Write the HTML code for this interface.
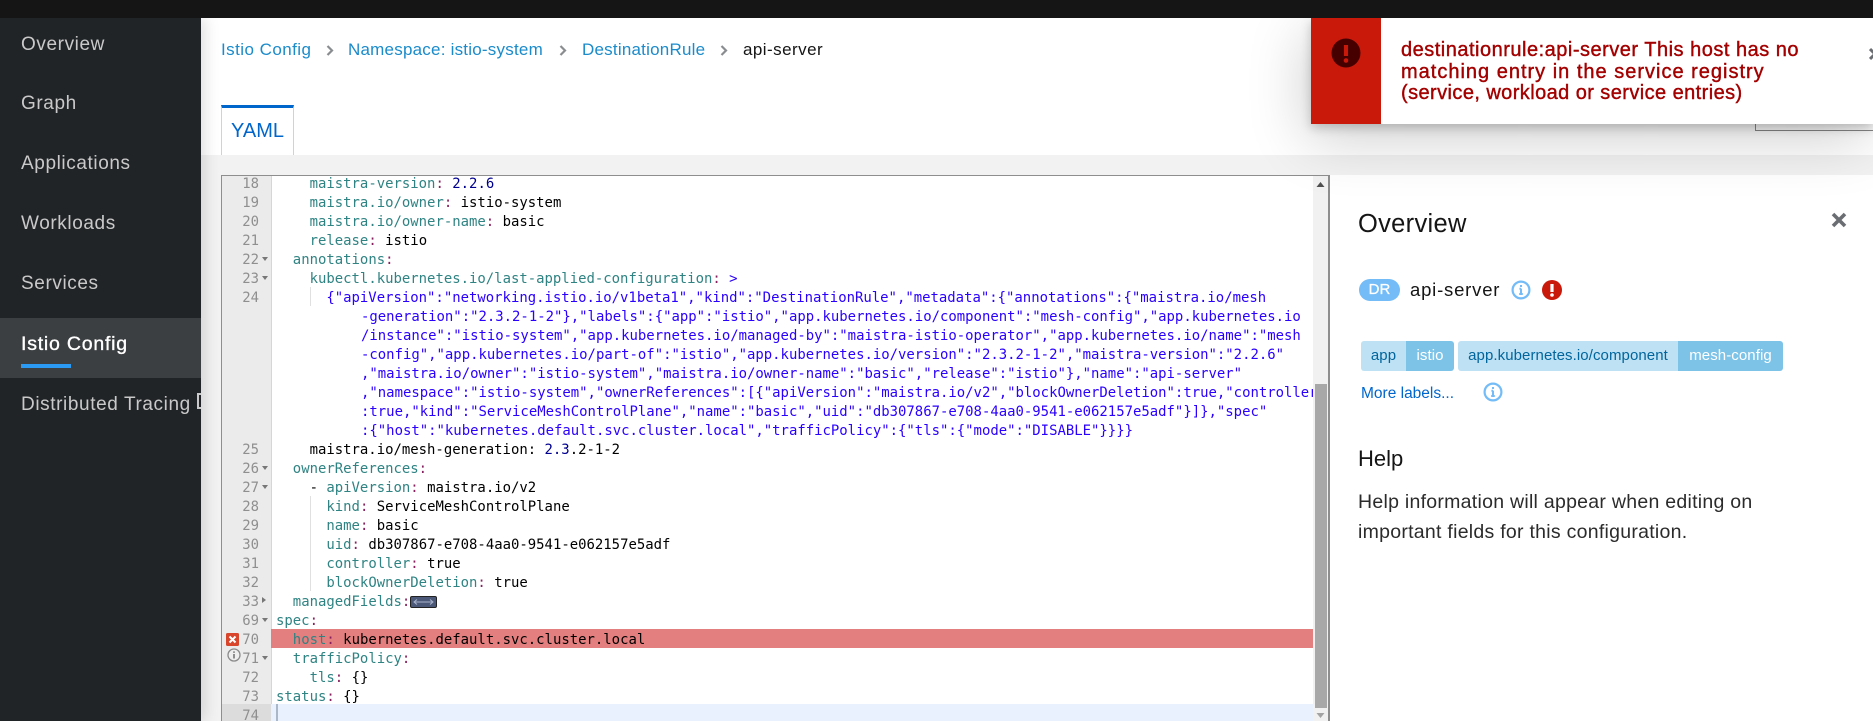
<!DOCTYPE html>
<html><head><meta charset="utf-8">
<style>
html,body{margin:0;padding:0;width:1873px;height:721px;overflow:hidden;background:#fff;font-family:"Liberation Sans",sans-serif}
.a{position:absolute;white-space:pre}
#top{left:0;top:0;width:1873px;height:18px;background:#151515;z-index:9}
#side{left:0;top:18px;width:201px;height:703px;background:#212427;z-index:6;box-shadow:4px 0 14px rgba(0,0,0,.13);overflow:hidden}
.nav{position:absolute;left:21px;font-size:19px;letter-spacing:.6px;color:#c9c9c9;line-height:24px}
#main-bg{left:201px;top:155px;width:1672px;height:566px;background:#f2f2f2}
.bc{top:40px;font-size:17px;letter-spacing:.22px;line-height:20px;color:#1a8bcb}
#ed{left:221px;top:175px;width:1109px;height:546px;background:#fff;border-left:1px solid #8e8e8e;border-top:1px solid #8e8e8e;border-right:2px solid #8e8e8e;box-sizing:border-box;overflow:hidden}
#code{position:absolute;left:0;top:0;width:1091px;height:546px;overflow:hidden}
#gut{position:absolute;left:0;top:0;width:49px;height:546px;background:#ebebeb;border-right:1px solid #d6d6d6;box-sizing:content-box}
.r,.n{position:absolute;margin-top:2px;font-family:"DejaVu Sans Mono",monospace;font-size:13.95px;line-height:19px;height:19px;white-space:pre;color:#000}
.r{left:54px}
.n{left:0;width:37px;text-align:right;color:#8f8f8f}
.k{color:#2f8383}.p{color:#86205f}.d{color:#00008f}.s{color:#2a00ff}
.w{left:139px;color:#2a00ff}
.f{position:absolute;left:40px;width:0;height:0}
.fd{border-left:3px solid transparent;border-right:3px solid transparent;border-top:4px solid #777}
.fr{border-top:3px solid transparent;border-bottom:3px solid transparent;border-left:4px solid #777}
.lab{top:341px;height:30px;line-height:30px;font-size:15px;text-align:center;letter-spacing:.08px}
.lk{background:#bee1f4;color:#00659c}.lv{background:#7dc3e8;color:#fff}
</style></head>
<body>
<div class="a" id="top"></div>

<div class="a" id="side">
<div class="nav" style="top:15px">Overview</div>
<div class="nav" style="top:74px">Graph</div>
<div class="nav" style="top:134px">Applications</div>
<div class="nav" style="top:194px">Workloads</div>
<div class="nav" style="top:254px">Services</div>
<div style="position:absolute;left:0;top:300px;width:201px;height:60px;background:#3c3f42"></div>
<div style="position:absolute;left:21px;top:346px;width:50px;height:4px;background:#2b9af3"></div>
<div class="nav" style="top:314px;color:#fff;-webkit-text-stroke:.35px #fff;font-size:19.5px;letter-spacing:.78px">Istio Config</div>
<div class="nav" style="top:375px">Distributed Tracing</div>
<div style="position:absolute;left:197px;top:375px;width:8px;height:16px;border:2px solid #c9c9c9;box-sizing:border-box"></div>
</div>

<div class="a" id="main-bg"></div>

<div class="a bc" style="left:221px;letter-spacing:.45px">Istio Config</div>
<div class="a bc" style="left:348px">Namespace: istio-system</div>
<div class="a bc" style="left:582px">DestinationRule</div>
<div class="a bc" style="left:743px;color:#151515;letter-spacing:.45px">api-server</div>
<svg class="a" style="left:326px;top:45px" width="8" height="11"><path d="M1.5 1l4.5 4.5-4.5 4.5" fill="none" stroke="#8a8d90" stroke-width="2.2"/></svg>
<svg class="a" style="left:559px;top:45px" width="8" height="11"><path d="M1.5 1l4.5 4.5-4.5 4.5" fill="none" stroke="#8a8d90" stroke-width="2.2"/></svg>
<svg class="a" style="left:720px;top:45px" width="8" height="11"><path d="M1.5 1l4.5 4.5-4.5 4.5" fill="none" stroke="#8a8d90" stroke-width="2.2"/></svg>

<div class="a" style="left:221px;top:105px;width:73px;height:50px;background:#fff;border-top:3px solid #06c;border-left:1px solid #d2d2d2;border-right:1px solid #d2d2d2;box-sizing:border-box;z-index:1"></div>
<div class="a" style="left:231px;top:118px;font-size:20px;line-height:26px;color:#06c;z-index:2">YAML</div>

<div class="a" style="left:1755px;top:120px;width:118px;height:11px;border-left:1px solid #8a8a8a;border-bottom:1px solid #8a8a8a;box-sizing:border-box"></div>

<div class="a" id="ed">
<div id="gut">
<div style="position:absolute;left:0;top:528px;width:49px;height:18px;background:#dcdcdc"></div>
</div>
<div id="code">
<div style="position:absolute;left:49px;top:528px;width:1042px;height:19px;background:#e8f1fd"></div>
<div style="position:absolute;left:49px;top:453px;width:1042px;height:19px;background:#e47f7f"></div>
<div style="position:absolute;left:54px;top:528px;width:2px;height:19px;background:#a9b7c9"></div>
<div style="position:absolute;left:88px;top:111px;width:1px;height:19px;background:#e0e0e0"></div>
<div style="position:absolute;left:88px;top:320px;width:1px;height:95px;background:#e0e0e0"></div>

<div class="n" style="top:-3px">18</div><div class="r" style="top:-3px">    <span class="k">maistra-version</span><span class="p">:</span> <span class="d">2.2.6</span></div>
<div class="n" style="top:16px">19</div><div class="r" style="top:16px">    <span class="k">maistra.io/owner</span><span class="p">:</span> istio-system</div>
<div class="n" style="top:35px">20</div><div class="r" style="top:35px">    <span class="k">maistra.io/owner-name</span><span class="p">:</span> basic</div>
<div class="n" style="top:54px">21</div><div class="r" style="top:54px">    <span class="k">release</span><span class="p">:</span> istio</div>
<div class="n" style="top:73px">22</div><div class="f fd" style="top:81px"></div><div class="r" style="top:73px">  <span class="k">annotations</span><span class="p">:</span></div>
<div class="n" style="top:92px">23</div><div class="f fd" style="top:100px"></div><div class="r" style="top:92px">    <span class="k">kubectl.kubernetes.io/last-applied-configuration</span><span class="p">:</span> <span class="s">&gt;</span></div>
<div class="n" style="top:111px">24</div><div class="r" style="top:111px;color:#2a00ff">      {"apiVersion":"networking.istio.io/v1beta1","kind":"DestinationRule","metadata":{"annotations":{"maistra.io/mesh</div>
<div class="r w" style="top:130px">-generation":"2.3.2-1-2"},"labels":{"app":"istio","app.kubernetes.io/component":"mesh-config","app.kubernetes.io</div>
<div class="r w" style="top:149px">/instance":"istio-system","app.kubernetes.io/managed-by":"maistra-istio-operator","app.kubernetes.io/name":"mesh</div>
<div class="r w" style="top:168px">-config","app.kubernetes.io/part-of":"istio","app.kubernetes.io/version":"2.3.2-1-2","maistra-version":"2.2.6"</div>
<div class="r w" style="top:187px">,"maistra.io/owner":"istio-system","maistra.io/owner-name":"basic","release":"istio"},"name":"api-server"</div>
<div class="r w" style="top:206px">,"namespace":"istio-system","ownerReferences":[{"apiVersion":"maistra.io/v2","blockOwnerDeletion":true,"controller"</div>
<div class="r w" style="top:225px">:true,"kind":"ServiceMeshControlPlane","name":"basic","uid":"db307867-e708-4aa0-9541-e062157e5adf"}]},"spec"</div>
<div class="r w" style="top:244px">:{"host":"kubernetes.default.svc.cluster.local","trafficPolicy":{"tls":{"mode":"DISABLE"}}}}</div>
<div class="n" style="top:263px">25</div><div class="r" style="top:263px">    maistra.io/mesh-generation: <span class="d">2.3</span>.2-1-2</div>
<div class="n" style="top:282px">26</div><div class="f fd" style="top:290px"></div><div class="r" style="top:282px">  <span class="k">ownerReferences</span><span class="p">:</span></div>
<div class="n" style="top:301px">27</div><div class="f fd" style="top:309px"></div><div class="r" style="top:301px">    - <span class="k">apiVersion</span><span class="p">:</span> maistra.io/v2</div>
<div class="n" style="top:320px">28</div><div class="r" style="top:320px">      <span class="k">kind</span><span class="p">:</span> ServiceMeshControlPlane</div>
<div class="n" style="top:339px">29</div><div class="r" style="top:339px">      <span class="k">name</span><span class="p">:</span> basic</div>
<div class="n" style="top:358px">30</div><div class="r" style="top:358px">      <span class="k">uid</span><span class="p">:</span> db307867-e708-4aa0-9541-e062157e5adf</div>
<div class="n" style="top:377px">31</div><div class="r" style="top:377px">      <span class="k">controller</span><span class="p">:</span> true</div>
<div class="n" style="top:396px">32</div><div class="r" style="top:396px">      <span class="k">blockOwnerDeletion</span><span class="p">:</span> true</div>
<div class="n" style="top:415px">33</div><div class="f fr" style="top:421px"></div><div class="r" style="top:415px">  <span class="k">managedFields</span><span class="p">:</span></div>
<div style="position:absolute;left:188px;top:420px;width:27px;height:12px;background:#4c5878;border:1px solid #222;border-radius:2px;box-sizing:border-box"></div>
<svg style="position:absolute;left:191px;top:422px" width="21" height="8"><path d="M1 4h19M4 1.5L1 4l3 2.5M17 1.5L20 4l-3 2.5" fill="none" stroke="#aab4cc" stroke-width="1"/></svg>
<div class="n" style="top:434px">69</div><div class="f fd" style="top:442px"></div><div class="r" style="top:434px"><span class="k">spec</span><span class="p">:</span></div>
<div class="n" style="top:453px">70</div><div class="r" style="top:453px">  <span class="k">host</span><span class="p">:</span> kubernetes.default.svc.cluster.local</div>
<div class="n" style="top:472px">71</div><div class="f fd" style="top:480px"></div><div class="r" style="top:472px">  <span class="k">trafficPolicy</span><span class="p">:</span></div>
<div class="n" style="top:491px">72</div><div class="r" style="top:491px">    <span class="k">tls</span><span class="p">:</span> {}</div>
<div class="n" style="top:510px">73</div><div class="r" style="top:510px"><span class="k">status</span><span class="p">:</span> {}</div>
<div class="n" style="top:529px">74</div>

<svg style="position:absolute;left:4px;top:457px" width="13" height="13"><rect x="0" y="0" width="13" height="13" rx="1.5" fill="#d9452b"/><path d="M3.5 3.5l6 6M9.5 3.5l-6 6" stroke="#fff" stroke-width="2"/></svg>
<svg style="position:absolute;left:5px;top:472px" width="14" height="14"><circle cx="7" cy="7" r="6" fill="#eee" stroke="#8a8a8a" stroke-width="1.3"/><path d="M7 6v4.5M7 3.4v1.5" stroke="#777" stroke-width="1.6"/></svg>
</div>
<div style="position:absolute;left:1091px;top:0;width:15px;height:546px;background:#f1f1f1"></div>
<div style="position:absolute;left:1093px;top:208px;width:12px;height:324px;background:#a8a8a8"></div>
<svg style="position:absolute;left:1094px;top:5px" width="9" height="7"><path d="M4.5 1L8.5 6H.5z" fill="#505050"/></svg>
<svg style="position:absolute;left:1094px;top:536px" width="9" height="7"><path d="M4.5 6L8.5 1H.5z" fill="#a3a3a3"/></svg>
</div>

<div class="a" style="left:1330px;top:175px;width:543px;height:546px;background:#fff"></div>
<div class="a" style="left:1358px;top:209px;font-size:25.5px;line-height:30px;letter-spacing:.3px;color:#151515">Overview</div>
<svg class="a" style="left:1831px;top:212px" width="16" height="16"><path d="M2 2l12 12M14 2L2 14" stroke="#6a6e73" stroke-width="3.6"/></svg>
<div class="a" style="left:1359px;top:279px;width:41px;height:22px;border-radius:11px;background:#73bcf7;color:#fff;font-size:15px;line-height:22px;text-align:center;-webkit-text-stroke:.25px #fff">DR</div>
<div class="a" style="left:1410px;top:279px;font-size:18.5px;line-height:22px;letter-spacing:.8px;color:#151515">api-server</div>
<svg class="a" style="left:1511px;top:280px" width="20" height="20"><circle cx="10" cy="10" r="8.4" fill="#fff" stroke="#73bcf7" stroke-width="2.2"/><path d="M10 8.6v5.2M8.2 14h3.6M8.4 8.8H10M10 5v2" stroke="#73bcf7" stroke-width="2" fill="none"/></svg>
<svg class="a" style="left:1542px;top:280px" width="20" height="20"><circle cx="10" cy="10" r="10" fill="#c9190b"/><path d="M10 4v8" stroke="#fff" stroke-width="3.2"/><circle cx="10" cy="15" r="1.8" fill="#fff"/></svg>

<div class="a lab lk" style="left:1361px;width:45px;border-radius:3px 0 0 3px">app</div>
<div class="a lab lv" style="left:1406px;width:48px;border-radius:0 3px 3px 0">istio</div>
<div class="a lab lk" style="left:1458px;width:220px;border-radius:3px 0 0 3px">app.kubernetes.io/component</div>
<div class="a lab lv" style="left:1678px;width:105px;border-radius:0 3px 3px 0">mesh-config</div>
<div class="a" style="left:1361px;top:383px;font-size:15.5px;line-height:22px;color:#06c">More labels...</div>
<svg class="a" style="left:1483px;top:382px" width="20" height="20"><circle cx="10" cy="10" r="8.4" fill="#fff" stroke="#73bcf7" stroke-width="2.2"/><path d="M10 8.6v5.2M8.2 14h3.6M8.4 8.8H10M10 5v2" stroke="#73bcf7" stroke-width="2" fill="none"/></svg>

<div class="a" style="left:1358px;top:446px;font-size:22px;line-height:26px;color:#151515">Help</div>
<div class="a" style="left:1358px;top:487px;font-size:19.5px;line-height:30px;letter-spacing:.27px;color:#2b2b2b">Help information will appear when editing on
important fields for this configuration.</div>

<!-- notification -->
<div class="a" style="left:1311px;top:18px;width:562px;height:106px;background:#fff;z-index:8;box-shadow:0 4px 10px rgba(0,0,0,.2),-4px 14px 60px rgba(0,0,0,.2)">
<div style="position:absolute;left:0;top:0;width:70px;height:106px;background:#c9190b"></div>
<svg style="position:absolute;left:20px;top:20px" width="30" height="30"><circle cx="15" cy="15" r="14.5" fill="#470000"/><path d="M15 7v11" stroke="#c9190b" stroke-width="4"/><circle cx="15" cy="22.5" r="2.3" fill="#c9190b"/></svg>
<div style="position:absolute;left:90px;top:22px;font-size:20px;line-height:21.7px;color:#a30000;-webkit-text-stroke:.4px #a30000;white-space:pre"><div style="letter-spacing:.5px">destinationrule:api-server This host has no</div><div style="letter-spacing:1px">matching entry in the service registry</div><div style="letter-spacing:.42px">(service, workload or service entries)</div></div>
<svg style="position:absolute;left:558px;top:29px" width="10" height="14"><path d="M1 2l10 10M11 2L1 12" stroke="#6a6e73" stroke-width="3"/></svg>
</div>
</body></html>
